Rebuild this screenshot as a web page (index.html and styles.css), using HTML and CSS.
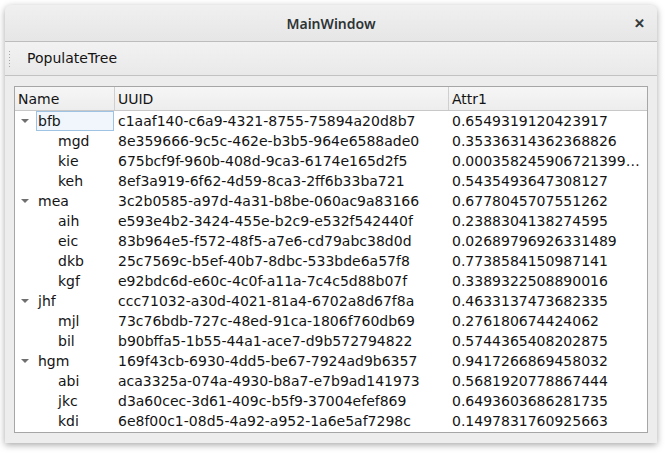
FILE: index.html
```html
<!DOCTYPE html>
<html lang="en">
  <head>
    <meta charset="utf-8">
    <title>MainWindow</title>
    <link rel="stylesheet" href="styles.css">
  </head>
  <body>
    <div class="window">
      <div class="titlebar">
        <span></span>
        <span class="titlebar__title">MainWindow</span>
        <span class="titlebar__close">&#x2715;</span>
      </div>
      <div class="toolbar">
        <div class="toolbar__handle"></div>
        <div class="toolbar__button">PopulateTree</div>
      </div>
      <div class="content">
        <div class="tree">
          <div class="tree__header">
            <div class="tree__section">Name</div>
            <div class="tree__section">UUID</div>
            <div class="tree__section">Attr1</div>
          </div>
          <div class="tree__body">
            <div class="row parent">
              <div class="cell name"><span class="arrow"></span><span class="label focus">bfb</span></div>
              <div class="cell">c1aaf140-c6a9-4321-8755-75894a20d8b7</div>
              <div class="cell">0.6549319120423917</div>
            </div>
            <div class="row child">
              <div class="cell name"><span class="label">mgd</span></div>
              <div class="cell">8e359666-9c5c-462e-b3b5-964e6588ade0</div>
              <div class="cell">0.35336314362368826</div>
            </div>
            <div class="row child">
              <div class="cell name"><span class="label">kie</span></div>
              <div class="cell">675bcf9f-960b-408d-9ca3-6174e165d2f5</div>
              <div class="cell">0.000358245906721399&hellip;</div>
            </div>
            <div class="row child">
              <div class="cell name"><span class="label">keh</span></div>
              <div class="cell">8ef3a919-6f62-4d59-8ca3-2ff6b33ba721</div>
              <div class="cell">0.5435493647308127</div>
            </div>
            <div class="row parent">
              <div class="cell name"><span class="arrow"></span><span class="label">mea</span></div>
              <div class="cell">3c2b0585-a97d-4a31-b8be-060ac9a83166</div>
              <div class="cell">0.6778045707551262</div>
            </div>
            <div class="row child">
              <div class="cell name"><span class="label">aih</span></div>
              <div class="cell">e593e4b2-3424-455e-b2c9-e532f542440f</div>
              <div class="cell">0.2388304138274595</div>
            </div>
            <div class="row child">
              <div class="cell name"><span class="label">eic</span></div>
              <div class="cell">83b964e5-f572-48f5-a7e6-cd79abc38d0d</div>
              <div class="cell">0.02689796926331489</div>
            </div>
            <div class="row child">
              <div class="cell name"><span class="label">dkb</span></div>
              <div class="cell">25c7569c-b5ef-40b7-8dbc-533bde6a57f8</div>
              <div class="cell">0.7738584150987141</div>
            </div>
            <div class="row child">
              <div class="cell name"><span class="label">kgf</span></div>
              <div class="cell">e92bdc6d-e60c-4c0f-a11a-7c4c5d88b07f</div>
              <div class="cell">0.3389322508890016</div>
            </div>
            <div class="row parent">
              <div class="cell name"><span class="arrow"></span><span class="label">jhf</span></div>
              <div class="cell">ccc71032-a30d-4021-81a4-6702a8d67f8a</div>
              <div class="cell">0.4633137473682335</div>
            </div>
            <div class="row child">
              <div class="cell name"><span class="label">mjl</span></div>
              <div class="cell">73c76bdb-727c-48ed-91ca-1806f760db69</div>
              <div class="cell">0.276180674424062</div>
            </div>
            <div class="row child">
              <div class="cell name"><span class="label">bil</span></div>
              <div class="cell">b90bffa5-1b55-44a1-ace7-d9b572794822</div>
              <div class="cell">0.5744365408202875</div>
            </div>
            <div class="row parent">
              <div class="cell name"><span class="arrow"></span><span class="label">hgm</span></div>
              <div class="cell">169f43cb-6930-4dd5-be67-7924ad9b6357</div>
              <div class="cell">0.9417266869458032</div>
            </div>
            <div class="row child">
              <div class="cell name"><span class="label">abi</span></div>
              <div class="cell">aca3325a-074a-4930-b8a7-e7b9ad141973</div>
              <div class="cell">0.5681920778867444</div>
            </div>
            <div class="row child">
              <div class="cell name"><span class="label">jkc</span></div>
              <div class="cell">d3a60cec-3d61-409c-b5f9-37004efef869</div>
              <div class="cell">0.6493603686281735</div>
            </div>
            <div class="row child">
              <div class="cell name"><span class="label">kdi</span></div>
              <div class="cell">6e8f00c1-08d5-4a92-a952-1a6e5af7298c</div>
              <div class="cell">0.1497831760925663</div>
            </div>
          </div>
        </div>
      </div>
    </div>
  </body>
</html>
```

FILE: styles.css
```css
*, *::after, *::before {
  margin: 0;
  padding: 0;
  box-sizing: border-box;
}
body {
  width: 667px;
  height: 454px;
  background-color: #ffffff;
  font-family: "DejaVu Sans", sans-serif;
  font-size: 14px;
  color: #141414;
  overflow: hidden;
}
.window {
  display: flex;
  flex-direction: column;
  width: 652px;
  height: 438px;
  margin: 5px 0 0 5px;
  border-radius: 6px 6px 0 0;
  background-color: #ededed;
  box-shadow: 0 2px 7px rgba(0, 0, 0, 0.35);
}
.titlebar {
  display: grid;
  grid-template-columns: 1fr auto 1fr;
  align-items: center;
  height: 37px;
  border-bottom: 1px solid #bdbdbd;
  border-radius: 6px 6px 0 0;
  background-image: linear-gradient(#f0f0f0, #e6e6e6);
}
.titlebar__title {
  font-family: "Noto Sans", sans-serif;
  font-weight: 600;
  font-size: 14px;
  color: #2e3436;
}
.titlebar__close {
  justify-self: end;
  margin-right: 12px;
  font-family: "DejaVu Sans", sans-serif;
  font-weight: bold;
  font-size: 13px;
  color: #2e3436;
  -webkit-text-stroke: 0.6px #2e3436;
}
.toolbar {
  display: flex;
  align-items: center;
  height: 34px;
  border-bottom: 1px solid #c2c2c2;
  background-image: linear-gradient(#f2f2f2, #e9e9e9);
}
.toolbar__handle {
  width: 3px;
  height: 18px;
  margin-left: 3px;
  background-image: radial-gradient(#a8a8a8 35%, transparent 40%);
  background-size: 3px 3px;
}
.toolbar__button {
  margin-left: 16px;
  padding-bottom: 1px;
}
.content {
  flex: 1;
  display: flex;
  padding: 10px 9px 10px 9px;
}
.tree {
  flex: 1;
  display: flex;
  flex-direction: column;
  border: 1px solid #a6a6a6;
  background-color: #ffffff;
}
.tree__header, .row {
  display: grid;
  grid-template-columns: 100px 334px 198px;
}
.tree__header {
  height: 24px;
  border-bottom: 1px solid #c8c8c8;
  background-image: linear-gradient(#f6f6f6, #ededed);
}
.tree__section {
  display: flex;
  align-items: center;
  padding-left: 3px;
  border-right: 1px solid #cfcfcf;
}
.tree__section:last-child {
  border-right: none;
}
.row {
  height: 20px;
}
.cell {
  display: flex;
  align-items: center;
  padding-left: 3px;
  white-space: nowrap;
}
.name {
  padding-left: 0;
}
.arrow {
  width: 21px;
  display: flex;
  justify-content: center;
}
.arrow::before {
  content: '';
  margin-left: -2px;
  border-left: 4px solid transparent;
  border-right: 4px solid transparent;
  border-top: 4px solid #6f6f6f;
}
.label {
  display: flex;
  align-items: center;
  height: 20px;
  padding-left: 2px;
}
.child .label {
  margin-left: 41px;
}
.focus {
  flex: 1;
  margin-right: 1px;
  border: 1px solid #9fc3e3;
  padding-left: 1px;
  background-color: #f0f6fc;
}
```
